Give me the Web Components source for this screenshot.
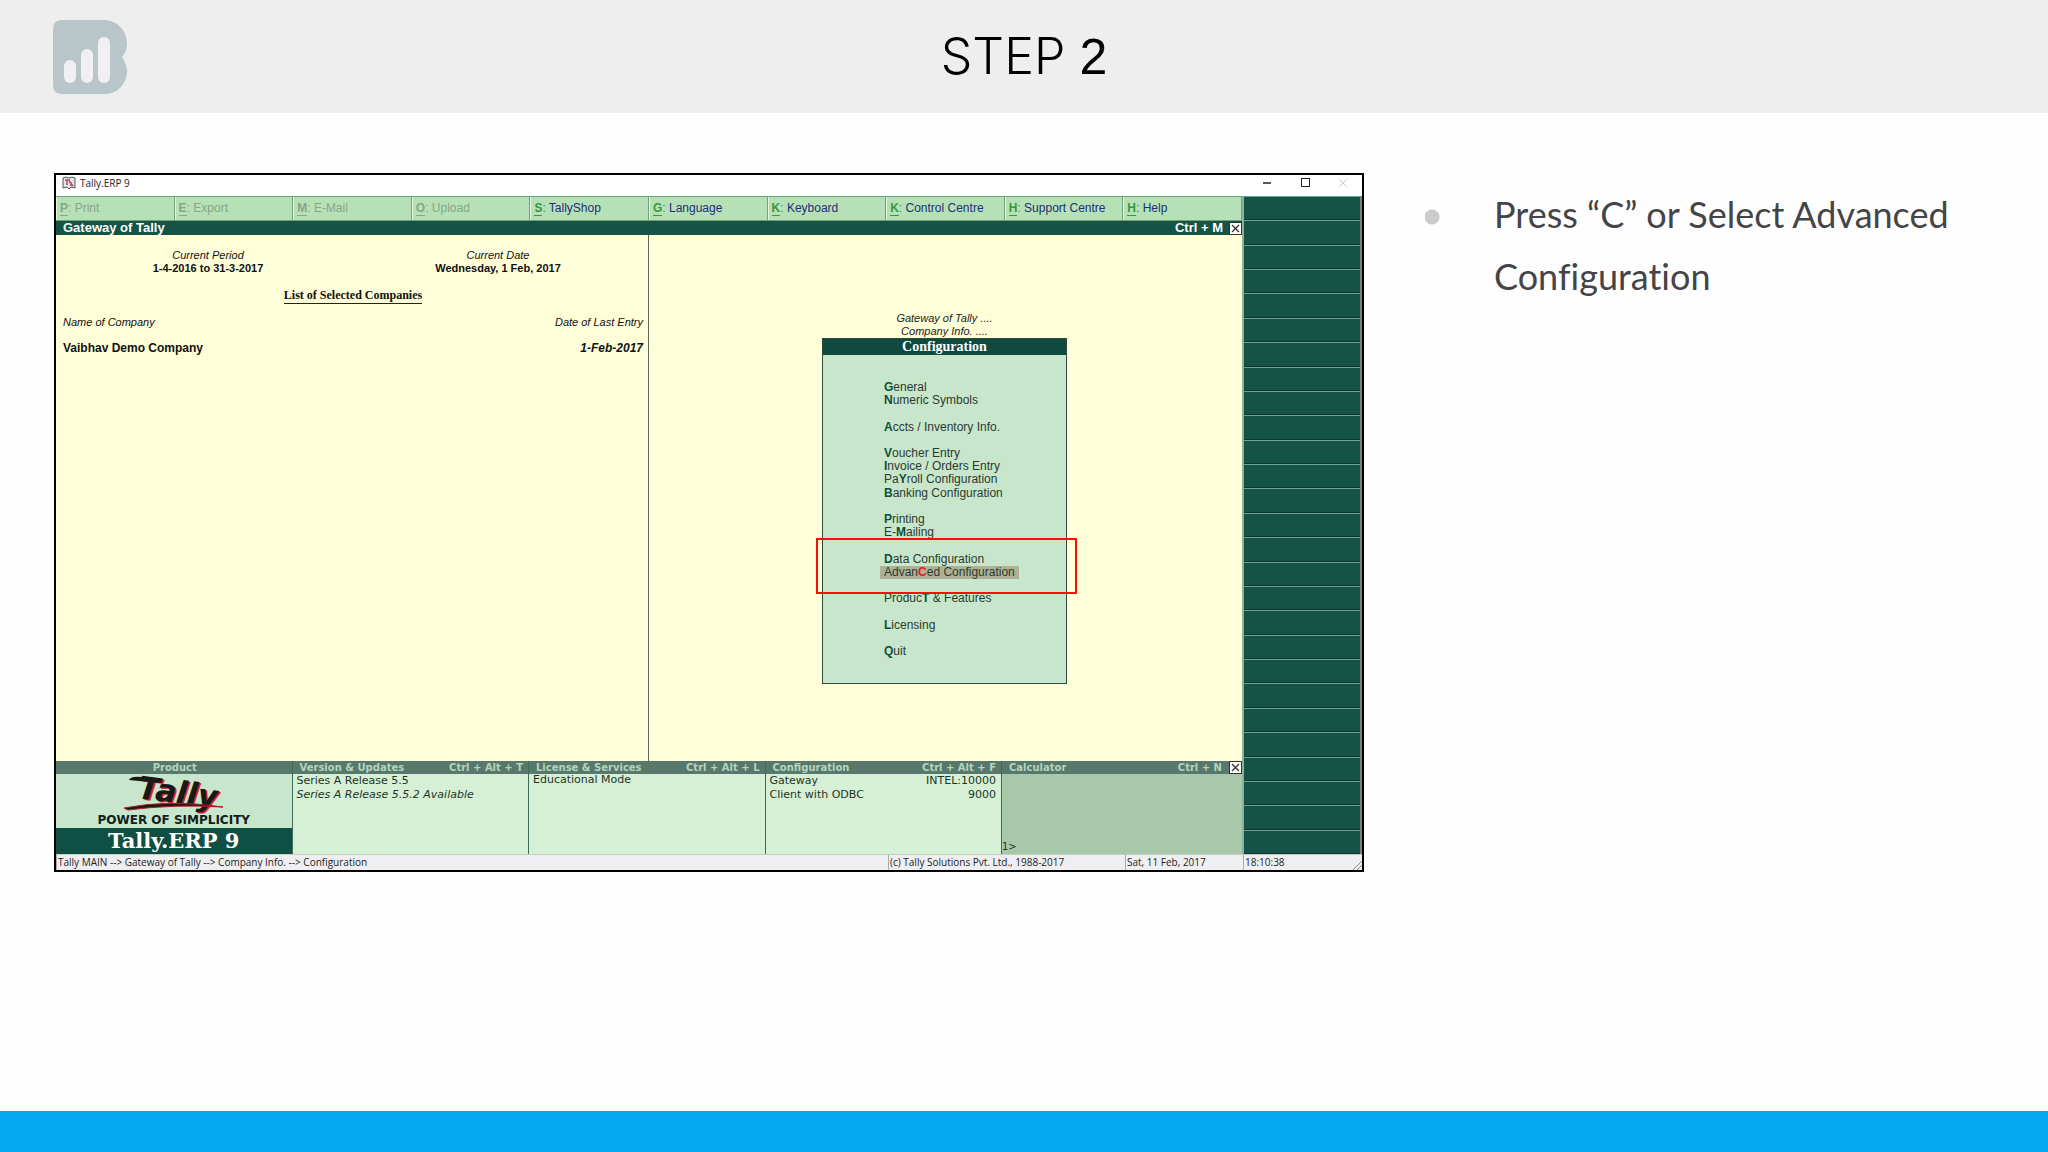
<!DOCTYPE html>
<html lang="en">
<head>
<meta charset="utf-8">
<title>Step 2</title>
<style>
  html, body { margin: 0; }
  body { background: #fefefe; font-family: "Liberation Sans", sans-serif; color: #111; }
</style>
</head>
<body>
<slide-page>
  <slide-header slot="header">STEP <b>2</b></slide-header>
  <tally-window slot="figure"></tally-window>
  <slide-notes slot="notes"><li>Press “C” or Select Advanced Configuration</li></slide-notes>
</slide-page>

<script>
function define(name, html) {
  const tpl = document.createElement('template');
  tpl.innerHTML = html;
  customElements.define(name, class extends HTMLElement {
    constructor() {
      super();
      this.attachShadow({ mode: 'open' }).append(tpl.content.cloneNode(true));
    }
  });
}

define('slide-page', `
<style>
  :host { display: flex; flex-direction: column; min-height: 100vh; }
  main { flex: 1; display: grid; grid-template-columns: minmax(0, 1310fr) minmax(0, 589fr); gap: 61px;
    align-items: start; padding: 60px 34px 40px 54px; }
  footer { height: 41px; background: #05a9f0; }
</style>
<slot name="header"></slot>
<main><slot name="figure"></slot><slot name="notes"></slot></main>
<footer></footer>`);

define('brand-logo', `
<style>:host { display: block; } svg { display: block; }</style>
<svg width="74" height="74" viewBox="0 0 74 74" role="img" aria-label="Logo">
  <path fill="#b8c6c9" d="M9 0H50C65 0 74 11 74 24C74 29 72 33 69 37C72 42 74 46 74 51C74 64 64 74 52 74H9Q0 74 0 65V9Q0 0 9 0Z"/>
  <g fill="#eff0f1"><rect x="11" y="40" width="12" height="23" rx="6"/><rect x="28" y="29" width="12" height="34" rx="6"/><rect x="45" y="17" width="12" height="46" rx="6"/></g>
</svg>`);

define('slide-header', `
<style>
  :host { display: block; background: #eee; }
  header { display: grid; grid-template-columns: 1fr auto 1fr; align-items: center; height: 113px; padding: 0 53px; }
  h1 { margin: 0; font: 300 50px/60px Inter, sans-serif; color: #000; }
  ::slotted(b) { font: 500 50px/60px "Liberation Sans", sans-serif; }
</style>
<header><brand-logo></brand-logo><h1><slot></slot></h1></header>`);

define('slide-notes', `
<style>
  :host { display: block; }
  ul { margin: 0; padding: 10px 0 0 0; list-style: none; }
  ::slotted(li) { display: block; padding-left: 69px; font: 400 36px/62px Lato, sans-serif; color: #454447;
    font-variant-ligatures: none;
    background: radial-gradient(circle at 7px 34px, #cbcacd 7px, transparent 8px); }
</style>
<ul><slot></slot></ul>`);

define('title-bar', `
<style>
  :host { display: flex; align-items: center; height: 16px; background: #fff; padding: 0 9px 5px 6px; gap: 4px;
    font: 10px/16px "Open Sans", sans-serif; color: #222; }
  .name { flex: 1; }
  .controls { display: flex; gap: 22px; padding-right: 2px; }
  button { all: unset; width: 16px; height: 16px; }
  svg { display: block; }
</style>
<svg width="14" height="14" viewBox="0 0 14 14"><path d="M1 2L4 1L7 2L10 1L13 2V12L9 11L7 13L5 11L1 12Z" fill="#e4e2e4" stroke="#555"/><path d="M3 4H8M5 4V9M7 5L11 10M9 6V10" stroke="#a8505c" stroke-width="1.5" fill="none"/></svg>
<span class="name"><slot></slot></span>
<span class="controls">
  <button aria-label="Minimise"><svg width="16" height="16"><path d="M4 8H12" stroke="#222" stroke-width="1.5"/></svg></button>
  <button aria-label="Maximise"><svg width="16" height="16"><rect x="4.5" y="3.5" width="8" height="8" fill="none" stroke="#222"/></svg></button>
  <button aria-label="Close"><svg width="16" height="16"><path d="M4 4L12 12M12 4L4 12" stroke="#ccc"/></svg></button>
</span>`);

define('menu-entry', `
<style>
  :host { flex: 1; display: block; box-sizing: border-box; border-left: 1px solid #e2f6e0; border-right: 1px solid #74a578; }
  button { all: unset; box-sizing: border-box; display: block; width: 100%; height: 23px; padding: 0 3px;
    font: 12px/23px "Liberation Sans", sans-serif; color: #1c2f78; white-space: nowrap; }
  b { color: #37983f; border-bottom: 1px solid #37983f; }
  i { font-style: normal; color: #37983f; }
  :host([off]) button, :host([off]) b, :host([off]) i { color: #86a68a; border-color: #86a68a; }
</style>
<button><b><slot name="key"></slot></b><i>:</i> <slot></slot></button>`);

define('close-box', `
<style>
  :host { display: block; }
  button { all: unset; box-sizing: border-box; display: block; width: 13px; height: 13px; background: #fff; border: 1px solid #333; }
  svg { display: block; }
</style>
<button aria-label="Close"><svg width="11" height="11"><path d="M2 2L9 9M9 2L2 9" stroke="#333" stroke-width="1.3"/></svg></button>`);

define('gateway-pane', `
<style>
  :host { display: block; box-sizing: border-box; flex: 0 0 593px; border-right: 1px solid #5c6650; padding: 14px 5px 0 7px;
    font: 11px/13px "Liberation Sans", sans-serif; color: #111; }
  .pair { display: grid; grid-template-columns: 1fr 1fr; text-align: center; }
  h2 { margin: 13px 0 12px; text-align: center; font: bold 12px/15px "Liberation Serif", serif; }
  h2 span { border-bottom: 1px solid #222; display: block; width: max-content; margin: 0 auto; }
  table { width: 100%; border-collapse: collapse; }
  th, td { padding: 0 0 13px; text-align: left; }
  th { font-weight: normal; font-style: italic; }
  td { font-weight: bold; font-size: 12px; }
  th + th, td + td { text-align: right; }
  td + td { font-style: italic; }
</style>
<div class="pair"><div><i>Current Period</i><br><b>1-4-2016 to 31-3-2017</b></div><div><i>Current Date</i><br><b>Wednesday, 1 Feb, 2017</b></div></div>
<h2><span>List of Selected Companies</span></h2>
<table><tr><th>Name of Company</th><th>Date of Last Entry</th></tr><tr><td>Vaibhav Demo Company</td><td>1-Feb-2017</td></tr></table>`);

define('config-menu', `
<style>
  :host { display: flex; flex-direction: column; align-items: center; flex: 1; padding: 77px 2px 77px 0;
    font: 11px/13px "Liberation Sans", sans-serif; color: #2b3a30; }
  .trail { text-align: center; font-style: italic; color: #222; }
  .box { position: relative; box-sizing: border-box; width: 245px; border: 1px solid #2d4a3c; background: #c8e6cb; }
  h2 { margin: 0; text-align: center; background: #104a3f; color: #fff; font: bold 14px/16px "Liberation Serif", serif; }
  ul { margin: 0; padding: 26px 0 25px 57px; height: 277px; list-style: none; display: grid; grid-template-rows: repeat(21, 1fr); }
  li { display: flex; }
  button { all: unset; padding: 0 4px; white-space: pre; font-size: 12px; line-height: 13px; }
  .on { background: #adb294; }
  b { color: #0b5137; }
  .on b { color: #f01414; }
  .mark { position: absolute; left: -7px; right: -11px; top: 199px; height: 52px; border: 2px solid #f5100c; }
</style>
<div class="trail">Gateway of Tally ....<br>Company Info. ....</div>
<div class="box">
  <h2>Configuration</h2>
  <ul>
    <li><button><b>G</b>eneral</button></li>
    <li><button><b>N</b>umeric Symbols</button></li>
    <li></li>
    <li><button><b>A</b>ccts / Inventory Info.</button></li>
    <li></li>
    <li><button><b>V</b>oucher Entry</button></li>
    <li><button><b>I</b>nvoice / Orders Entry</button></li>
    <li><button>Pa<b>Y</b>roll Configuration</button></li>
    <li><button><b>B</b>anking Configuration</button></li>
    <li></li>
    <li><button><b>P</b>rinting</button></li>
    <li><button>E-<b>M</b>ailing</button></li>
    <li></li>
    <li><button><b>D</b>ata Configuration</button></li>
    <li><button class="on">Advan<b>C</b>ed Configuration</button></li>
    <li></li>
    <li><button>Produc<b>T</b> &amp; Features</button></li>
    <li></li>
    <li><button><b>L</b>icensing</button></li>
    <li></li>
    <li><button><b>Q</b>uit</button></li>
  </ul>
  <div class="mark"></div>
</div>`);

define('info-panel', `
<style>
  :host { flex: 1; min-width: 0; display: flex; flex-direction: column; box-sizing: border-box; background: #d5f0d5; border-right: 1px solid #3c6b58;
    font: 11px/14px "DejaVu Sans", sans-serif; color: #1d3526; }
  :host(:last-child) { background: #a8c8aa; border: 0; }
  header { display: flex; align-items: center; height: 13px; padding: 0 5px 0 7px; background: #58786d; color: #b4d4bf; font-weight: bold; font-size: 10px; line-height: 13px; white-space: nowrap; }
  header slot[name=title] { display: block; flex: 1; }
  :host([center]) header { justify-content: center; }
  :host([center]) header slot[name=title] { flex: none; }
  ::slotted([slot=close]) { margin-left: 7px; margin-right: -5px; }
  .body { flex: 1; display: flex; flex-direction: column; }
  ::slotted(p) { margin: 0; padding: 0 5px 0 4px; display: flex; justify-content: space-between; }
  ::slotted(p.small) { line-height: 12px; }
  ::slotted(p.end) { margin-top: auto; padding-left: 0; font-size: 10px; }
</style>
<header><slot name="title"></slot><slot name="keys"></slot><slot name="close"></slot></header>
<div class="body"><slot></slot></div>`);

define('tally-brand', `
<style>
  :host { flex: 1; display: flex; flex-direction: column; background: #c8e6cb; text-align: center; }
  svg { display: block; margin: 0 auto; overflow: visible; }
  .motto { flex: 1; font: bold 12px/15px "DejaVu Sans", sans-serif; color: #10201a; }
  .name { background: #104f43; color: #fff; font: bold 21px/26px "DejaVu Serif", serif; }
</style>
<svg width="110" height="39" viewBox="0 0 110 39">
  <g transform="rotate(7 10 24)" font-family="DejaVu Sans" font-weight="bold" font-style="italic" font-size="31">
    <text x="20" y="24" fill="#d8222c">Tally</text><text x="18" y="23" fill="#191919">Tally</text></g>
  <path d="M10 6Q12 2 22 3L42 6L40 9Z" fill="#191919"/>
  <path d="M5 34Q50 25 104 33Q55 30 9 36Z" fill="#191919" stroke="#a61d26" stroke-width="1"/>
</svg>
<div class="motto">POWER OF SIMPLICITY</div>
<div class="name">Tally.ERP 9</div>`);

define('side-buttons', `
<style>
  :host { display: grid; grid-auto-rows: 1fr; background: #13574a; border-left: 2px solid #8fae9b; border-right: 2px solid #7d7f7d; }
  button { all: unset; box-sizing: border-box; border-top: 1px solid #6ea493; border-bottom: 1px solid #06382e; background: #145345; }
</style>${'<button aria-label="Unassigned"></button>'.repeat(27)}`);

define('status-bar', `
<style>
  :host { display: grid; grid-template-columns: 832fr 237fr 118fr 119fr; height: 16px; box-sizing: border-box; background: #efeff1; border-top: 1px solid #c9cdca;
    font: 10px/15px "Open Sans", sans-serif; color: #222; white-space: nowrap; }
  span { border-left: 1px solid #aaa; padding-left: 1px; }
  .last { display: flex; justify-content: space-between; align-items: end; }
  svg { display: block; }
</style>
<span>Tally MAIN --&gt; Gateway of Tally --&gt; Company Info. --&gt; Configuration</span>
<span>(c) Tally Solutions Pvt. Ltd., 1988-2017</span><span>Sat, 11 Feb, 2017</span>
<span class="last">18:10:38<svg width="10" height="10"><path d="M1 10L10 1M5 10L10 5" stroke="#888"/></svg></span>`);

define('tally-window', `
<style>
  :host { display: block; border: 2px solid #000; background: #fff; }
  .work { display: grid; grid-template-columns: minmax(0, 1186fr) minmax(0, 120fr); }
  .menu { display: flex; height: 23px; background: #b6e1b6; border-top: 1px solid #6f9f78; border-bottom: 1px solid #6f9f78; }
  .strip { display: flex; align-items: center; height: 14px; background: #145345; color: #fff; font: bold 13px/14px "Liberation Sans", sans-serif; padding-left: 7px; gap: 6px; }
  .strip span { flex: 1; }
  .desk { display: flex; min-height: 524px; background: #fefed8; box-sizing: border-box; }
  .panels { display: flex; height: 93px; }
  info-panel:last-child { flex: 0 0 240px; }
</style>
<title-bar>Tally.ERP 9</title-bar>
<div class="work">
  <div>
    <nav class="menu">
      <menu-entry off><span slot="key">P</span>Print</menu-entry>
      <menu-entry off><span slot="key">E</span>Export</menu-entry>
      <menu-entry off><span slot="key">M</span>E-Mail</menu-entry>
      <menu-entry off><span slot="key">O</span>Upload</menu-entry>
      <menu-entry><span slot="key">S</span>TallyShop</menu-entry>
      <menu-entry><span slot="key">G</span>Language</menu-entry>
      <menu-entry><span slot="key">K</span>Keyboard</menu-entry>
      <menu-entry><span slot="key">K</span>Control Centre</menu-entry>
      <menu-entry><span slot="key">H</span>Support Centre</menu-entry>
      <menu-entry><span slot="key">H</span>Help</menu-entry>
    </nav>
    <div class="strip"><span>Gateway of Tally</span>Ctrl + M <close-box></close-box></div>
    <div class="desk"><gateway-pane></gateway-pane><config-menu></config-menu></div>
    <div class="panels">
      <info-panel center><span slot="title">Product</span><tally-brand></tally-brand></info-panel>
      <info-panel><span slot="title">Version &amp; Updates</span><span slot="keys">Ctrl + Alt + T</span><p>Series A Release 5.5</p><p><i>Series A Release 5.5.2 Available</i></p></info-panel>
      <info-panel><span slot="title">License &amp; Services</span><span slot="keys">Ctrl + Alt + L</span><p class="small">Educational Mode</p></info-panel>
      <info-panel><span slot="title">Configuration</span><span slot="keys">Ctrl + Alt + F</span><p><span>Gateway</span><span>INTEL:10000</span></p><p><span>Client with ODBC</span><span>9000</span></p></info-panel>
      <info-panel><span slot="title">Calculator</span><span slot="keys">Ctrl + N</span><close-box slot="close"></close-box><p class="end">1&gt;</p></info-panel>
    </div>
  </div>
  <side-buttons></side-buttons>
</div>
<status-bar></status-bar>`);
</script>
</body>
</html>
